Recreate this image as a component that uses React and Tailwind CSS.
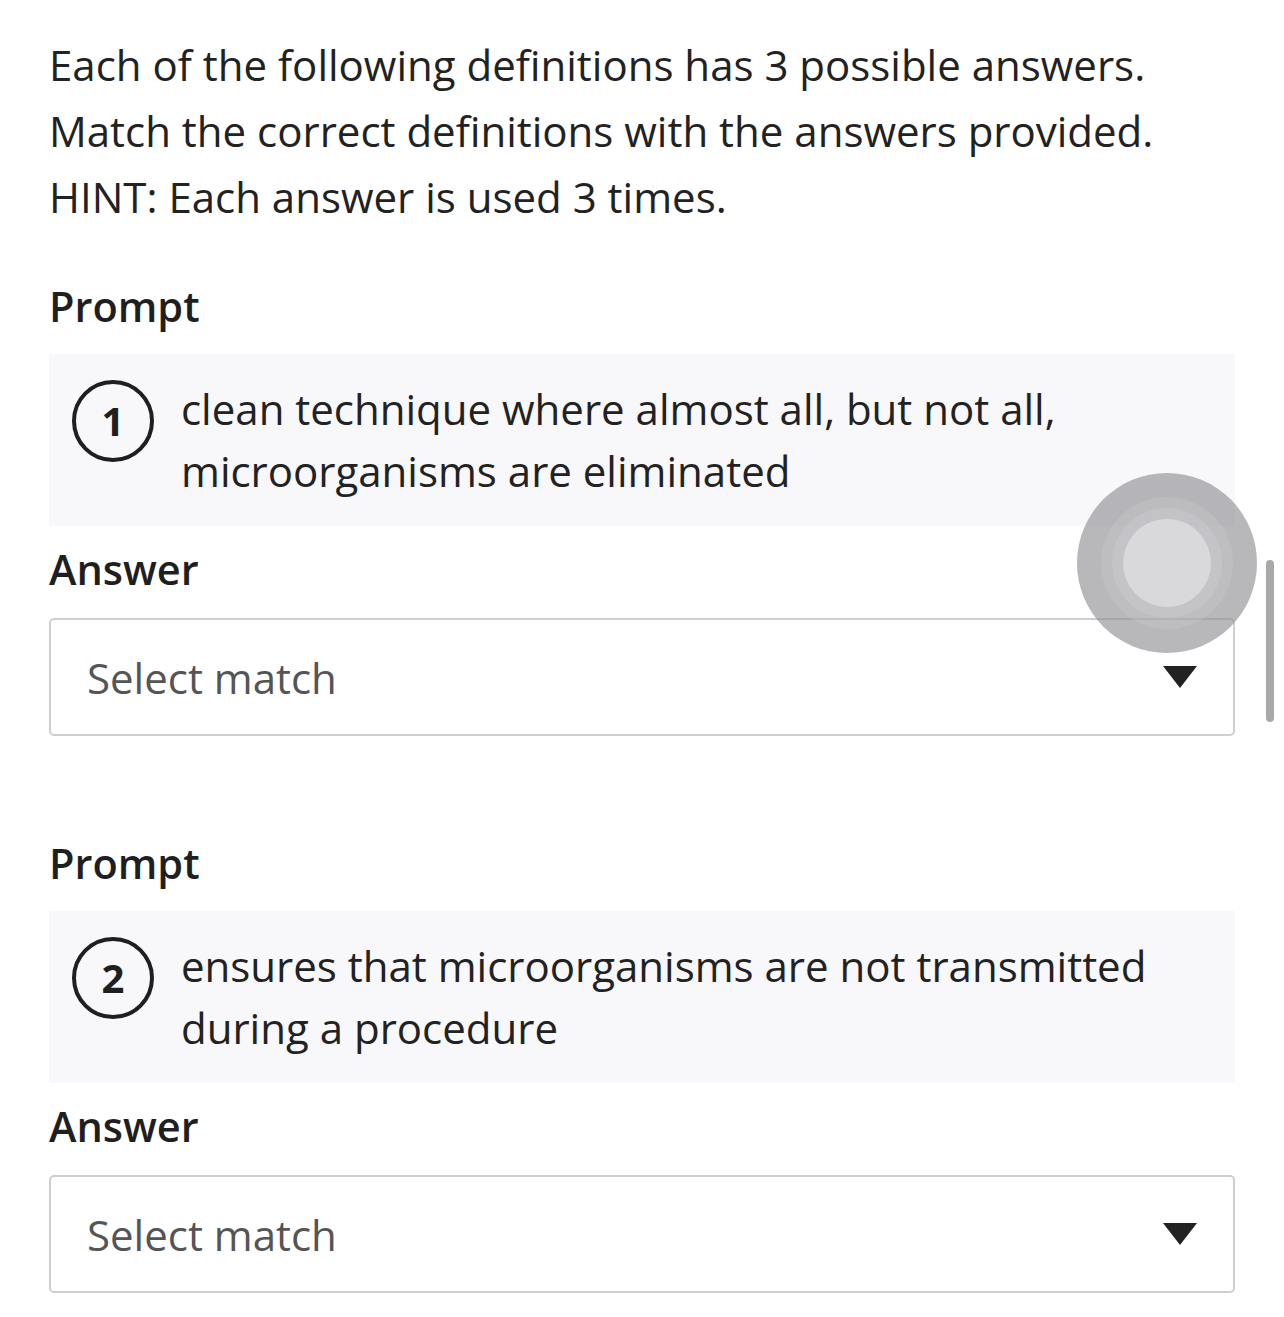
import React from "react";

function NumCircle({ n }) {
  return (
    <div className="flex h-[82px] w-[82px] shrink-0 items-center justify-center rounded-full border-[4px] border-[#1f1f1f] text-[40px] font-bold leading-none text-[#1f1f1f]">
      {n}
    </div>
  );
}

function Triangle() {
  return (
    <svg width="34" height="22" viewBox="0 0 34 22" className="shrink-0">
      <polygon points="0,0 34,0 17,22" fill="#222" />
    </svg>
  );
}

function Item({ n, text, first }) {
  return (
    <div className={first ? "mt-[51px]" : "mt-[102px]"}>
      <div className="text-[41.5px] font-semibold leading-[50px] text-[#1f1f1f]">Prompt</div>
      <div className="mt-[23px] flex items-start gap-[27px] bg-[#f8f7fa] py-[24px] pl-[23px] pr-[40px]">
        <div className="mt-[2px]">
          <NumCircle n={n} />
        </div>
        <div className="text-[42px] leading-[62px] text-[#222]">{text}</div>
      </div>
      <div className="mt-[18px] text-[41.5px] font-semibold leading-[50px] text-[#1f1f1f]">Answer</div>
      <div className="mt-[24px] flex h-[118px] items-center justify-between rounded-[5px] border-2 border-[#cfcfcf] bg-white pl-[36px] pr-[36px]">
        <span className="text-[42px] text-[#555]">Select match</span>
        <Triangle />
      </div>
    </div>
  );
}

export default function App() {
  return (
    <div
      className="relative h-[1317px] w-[1284px] overflow-hidden bg-white"
      style={{ fontFamily: '"Open Sans", "Noto Sans", sans-serif' }}
    >
      <div className="w-[1235px] pl-[49px] pt-[32px]">
        <div className="text-[42px] leading-[66px] text-[#222]">
          <div>Each of the following definitions has 3 possible answers.</div>
          <div>Match the correct definitions with the answers provided.</div>
          <div>HINT: Each answer is used 3 times.</div>
        </div>
        <Item
          n={1}
          first
          text={
            <>
              clean technique where almost all, but not all,
              <br />
              microorganisms are eliminated
            </>
          }
        />
        <Item
          n={2}
          text={
            <>
              ensures that microorganisms are not transmitted
              <br />
              during a procedure
            </>
          }
        />
      </div>

      {/* touch indicator */}
      <div className="absolute left-[1077px] top-[473px] flex h-[180px] w-[180px] items-center justify-center rounded-full bg-[rgba(140,140,145,0.62)]">
        <div className="flex h-[132px] w-[132px] items-center justify-center rounded-full bg-[rgba(200,200,204,0.35)]">
          <div className="flex h-[110px] w-[110px] items-center justify-center rounded-full bg-[rgba(210,210,214,0.35)]">
            <div className="h-[88px] w-[88px] rounded-full bg-[#d9d8db]" />
          </div>
        </div>
      </div>

      {/* scrollbar */}
      <div className="absolute left-[1266px] top-[560px] h-[162px] w-[8px] rounded-full bg-[#a8a8a8]" />
    </div>
  );
}
